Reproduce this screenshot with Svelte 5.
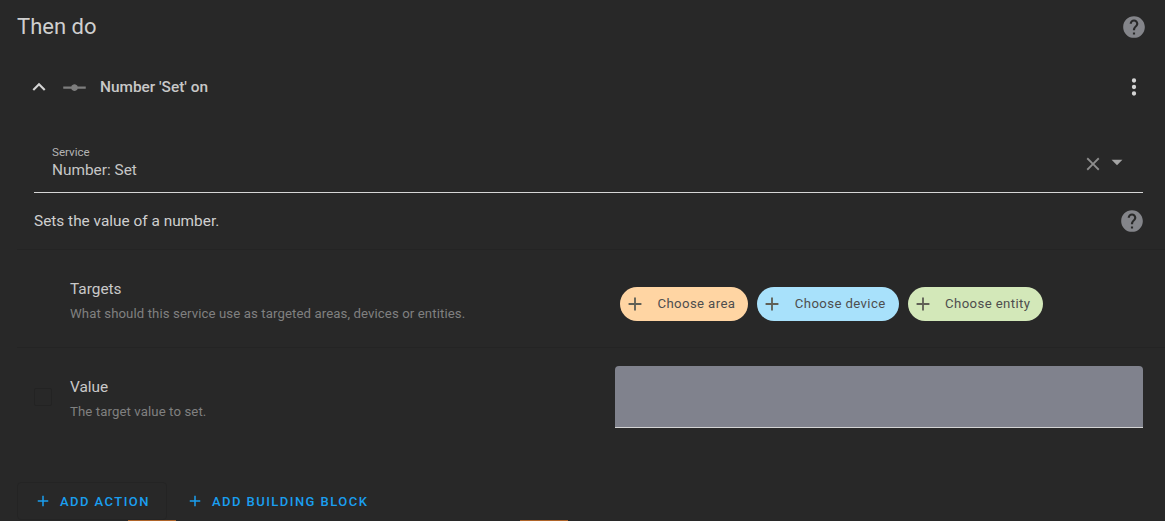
<script>
  const help = "M15.07,11.25L14.17,12.17C13.45,12.89 13,13.5 13,15H11V14.5C11,13.39 11.45,12.39 12.17,11.67L13.41,10.41C13.78,10.05 14,9.55 14,9C14,7.89 13.1,7 12,7A2,2 0 0,0 10,9H8A4,4 0 0,1 12,5A4,4 0 0,1 16,9C16,9.88 15.64,10.67 15.07,11.25M13,19H11V17H13M12,2A10,10 0 0,0 2,12A10,10 0 0,0 12,22A10,10 0 0,0 22,12C22,6.47 17.5,2 12,2Z";
  const plus = "M19,13H13V19H11V13H5V11H11V5H13V11H19V13Z";
  const chips = [
    { label: "Choose area", cls: "area" },
    { label: "Choose device", cls: "device" },
    { label: "Choose entity", cls: "entity" }
  ];
</script>

<div class="page">
  <header class="top">
    <h1>Then do</h1>
    <svg class="icon help" viewBox="0 0 24 24"><path d={help} /></svg>
  </header>

  <div class="action-head">
    <svg class="icon chev" viewBox="0 0 24 24"><path d="M7.41,15.41L12,10.83L16.59,15.41L18,14L12,8L6,14L7.41,15.41Z" /></svg>
    <svg class="icon ray" viewBox="0 0 24 24"><path d="M2,11H9.17C9.58,9.83 10.69,9 12,9C13.31,9 14.42,9.83 14.83,11H22V13H14.83C14.42,14.17 13.31,15 12,15C10.69,15 9.58,14.17 9.17,13H2V11Z" /></svg>
    <span class="action-title">Number 'Set' on</span>
    <svg class="icon dots" viewBox="0 0 24 24"><path d="M12,16A2,2 0 0,1 14,18A2,2 0 0,1 12,20A2,2 0 0,1 10,18A2,2 0 0,1 12,16M12,10A2,2 0 0,1 14,12A2,2 0 0,1 12,14A2,2 0 0,1 10,12A2,2 0 0,1 12,10M12,4A2,2 0 0,1 14,6A2,2 0 0,1 12,8A2,2 0 0,1 10,6A2,2 0 0,1 12,4Z" /></svg>
  </div>

  <div class="service">
    <div class="service-text">
      <span class="service-label">Service</span>
      <span class="service-value">Number: Set</span>
    </div>
    <svg class="icon close" viewBox="0 0 24 24"><path d="M19,6.41L17.59,5L12,10.59L6.41,5L5,6.41L10.59,12L5,17.59L6.41,19L12,13.41L17.59,19L19,17.59L13.41,12L19,6.41Z" /></svg>
    <svg class="icon caret" viewBox="0 0 24 24"><path d="M7,10L12,15L17,10H7Z" /></svg>
  </div>

  <div class="desc">
    <span>Sets the value of a number.</span>
    <svg class="icon help" viewBox="0 0 24 24"><path d={help} /></svg>
  </div>

  <section class="row targets">
    <div class="row-text">
      <div class="row-title">Targets</div>
      <div class="row-sub">What should this service use as targeted areas, devices or entities.</div>
    </div>
    <div class="chips">
      {#each chips as chip}
        <div class="chip {chip.cls}">
          <svg class="icon plus" viewBox="0 0 24 24"><path d={plus} /></svg>
          <span>{chip.label}</span>
        </div>
      {/each}
    </div>
  </section>

  <section class="row value">
    <div class="check"></div>
    <div class="row-text value-text">
      <div class="row-title">Value</div>
      <div class="row-sub">The target value to set.</div>
    </div>
    <div class="field"></div>
  </section>

  <footer class="buttons">
    <div class="btn outlined">
      <svg class="icon btn-plus" viewBox="0 0 24 24"><path d={plus} /></svg>
      <span>ADD ACTION</span>
    </div>
    <div class="btn">
      <svg class="icon btn-plus" viewBox="0 0 24 24"><path d={plus} /></svg>
      <span>ADD BUILDING BLOCK</span>
    </div>
  </footer>

  <i class="tick one"></i>
  <i class="tick two"></i>
</div>

<style>
  :global(body) {
    margin: 0;
    background: #282828;
  }
  .page {
    position: relative;
    width: 1165px;
    height: 521px;
    overflow: hidden;
    background: #282828;
    font-family: Roboto, "Liberation Sans", sans-serif;
    color: #c8c8c8;
  }
  .icon {
    display: block;
    width: 26px;
    height: 26px;
    flex: none;
    fill: currentColor;
  }
  .top {
    display: flex;
    align-items: center;
    justify-content: space-between;
    height: 54px;
    padding: 0 18px 0 17px;
  }
  h1 {
    margin: 0;
    font-size: 22px;
    font-weight: 400;
    color: #cfcfcf;
    line-height: 54px;
  }
  .help {
    color: #84858a;
  }
  .action-head {
    display: flex;
    align-items: center;
    height: 66px;
    padding: 0 18px 0 26px;
  }
  .chev {
    color: #d4d4d4;
  }
  .ray {
    margin-left: 8.5px;
    width: 27px;
    height: 27px;
    color: #7d7d7d;
  }
  .action-title {
    margin-left: 12.5px;
    font-size: 15.4px;
    font-weight: 500;
    color: #c8c8c8;
  }
  .dots {
    margin-left: auto;
    color: #d4d4d4;
  }
  .service {
    display: flex;
    align-items: center;
    height: 56px;
    margin: 16px 22px 0 34px;
    padding: 0 13px 0 18px;
    border-bottom: 1px solid #d6d6d6;
  }
  .service-text {
    display: flex;
    flex-direction: column;
    flex: 1;
    margin-top: -3px;
  }
  .service-label {
    font-size: 11.6px;
    line-height: 14px;
    color: #b4b4b4;
  }
  .service-value {
    font-size: 15.4px;
    line-height: 22px;
    color: #c6c6c6;
  }
  .close {
    width: 22px;
    height: 22px;
    color: #8d8d8d;
  }
  .caret {
    margin-top: -4px;
    color: #a4a4a4;
  }
  .desc {
    display: flex;
    align-items: center;
    justify-content: space-between;
    height: 56px;
    margin-left: 17px;
    padding: 0 20px 0 17px;
    font-size: 15.4px;
    color: #cfcfcf;
    border-bottom: 1px solid #242424;
  }
  .row {
    display: flex;
    margin-left: 17px;
    padding-left: 53px;
  }
  .targets {
    height: 97px;
    border-bottom: 1px solid #242424;
  }
  .row-text {
    width: 545px;
    flex: none;
    margin-top: 28px;
  }
  .row-title {
    font-size: 15.4px;
    line-height: 22px;
    color: #c9c9c9;
  }
  .row-sub {
    margin-top: 5px;
    font-size: 13.2px;
    line-height: 18px;
    letter-spacing: 0.1px;
    color: #808080;
  }
  .chips {
    display: flex;
    gap: 9px;
    margin: 37px 0 0 5px;
    height: 34px;
  }
  .chip {
    display: flex;
    align-items: center;
    height: 34px;
    padding: 0 13px 0 4px;
    border-radius: 17px;
    font-size: 13.2px;
    letter-spacing: 0.38px;
    line-height: 32px;
    color: #4e4e4e;
  }
  .chip span {
    margin-left: 11.5px;
    margin-bottom: 1px;
  }
  .plus {
    width: 22px;
    height: 22px;
    color: #5f5f55;
  }
  .area { background: #ffd5a3; }
  .device { background: #a8e1fb; }
  .entity { background: #d3e8b9; }
  .value {
    height: 97px;
    padding-left: 17px;
  }
  .check {
    width: 16px;
    height: 16px;
    margin-top: 40px;
    border: 1px solid #232323;
    border-radius: 2px;
    flex: none;
  }
  .value-text {
    margin-left: 18px;
    margin-top: 28px;
  }
  .field {
    width: 528px;
    height: 61px;
    margin-top: 18px;
    background: #80828d;
    border-bottom: 1px solid #d4d4d4;
    border-radius: 4px 4px 0 0;
    flex: none;
  }
  .buttons {
    display: flex;
    margin: 37px 0 0 17px;
  }
  .btn {
    display: flex;
    align-items: center;
    height: 38px;
    padding: 0 9px 0 13px;
    font-size: 13px;
    font-weight: 500;
    letter-spacing: 1.45px;
    color: #1a9ff0;
    white-space: nowrap;
  }
  .outlined {
    box-sizing: border-box;
    width: 150px;
    border: 1px solid #242424;
    border-radius: 4px;
    padding-left: 16px;
    margin-right: 6px;
  }
  .btn-plus {
    width: 18px;
    height: 18px;
    margin-right: 8px;
  }
  .tick {
    position: absolute;
    bottom: 0;
    width: 48px;
    height: 1px;
    background: #b0652a;
  }
  .one { left: 128px; }
  .two { left: 520px; }
</style>
